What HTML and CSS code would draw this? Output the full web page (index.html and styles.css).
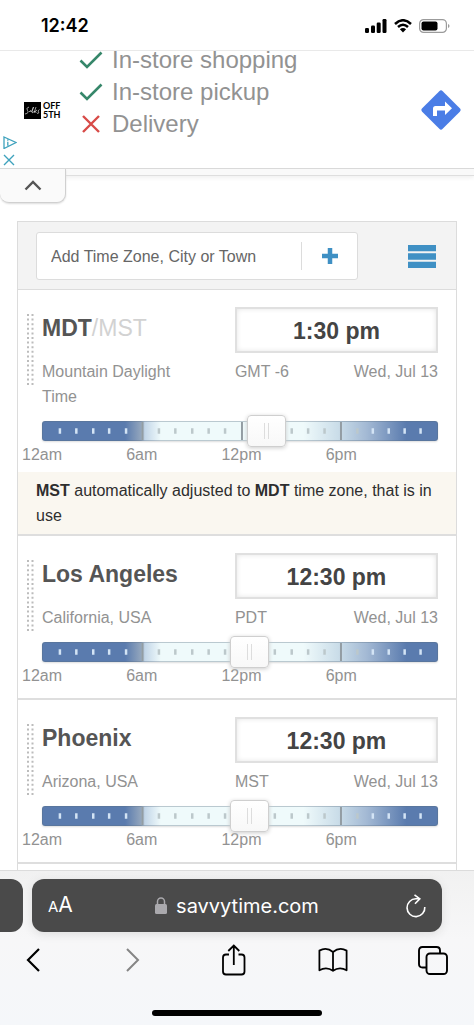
FILE: index.html
```html
<!DOCTYPE html>
<html lang="en">
<head>
<meta charset="utf-8">
<meta name="viewport" content="width=device-width, initial-scale=1">
<title>Time zone converter</title>
<link rel="stylesheet" href="styles.css">
</head>
<body>
<svg class="defs" aria-hidden="true">
  <symbol id="grip" viewBox="0 0 8 72">
    <path d="M2 0V72M6.500 0V72" stroke="#bcbcbc" stroke-width="2" stroke-dasharray="2 2.600" fill="none"/>
  </symbol>
  <symbol id="ticks" viewBox="0 0 396 20" preserveAspectRatio="none">
    <path d="M17 7v6M33.500 7v6M50.500 7v6M66.500 7v6M83.500 7v6M331.500 7v6M347.500 7v6M363.500 7v6M379.500 7v6" stroke="#d3e4f5" stroke-width="2.500"/>
    <path d="M116.500 7v6M133 7v6M150 7v6M166.500 7v6M183 7v6M216 7v6M233 7v6M250 7v6M266.500 7v6M283 7v6M316 7v6" stroke="#bcc8cb" stroke-width="2.500"/>
    <path d="M100 0v20M200 0v20M299.500 0v20" stroke="#939da3" stroke-width="2"/>
  </symbol>
  <symbol id="check" viewBox="0 0 24 18">
    <path d="M1.500 9.500L8 16L22.500 1.500" fill="none" stroke="#36876a" stroke-width="2.600"/>
  </symbol>
</svg>

<header class="status">
  <span class="clock">12:42</span>
  <span class="indicators">
    <svg width="22" height="14" viewBox="0 0 22 14"><rect x="0" y="9" width="4" height="5" rx="1.200"/><rect x="6" y="6.500" width="4" height="7.500" rx="1.200"/><rect x="11.700" y="3.500" width="4" height="10.500" rx="1.200"/><rect x="17.500" y="0" width="4" height="14" rx="1.200"/></svg>
    <svg width="18" height="14" viewBox="0 0 18 14"><path d="M1 5Q9-2.500 17 5M4 8Q9 3.500 14 8" fill="none" stroke="#000" stroke-width="2.500"/><path d="M9 13.500L5.900 10.200Q9 7.600 12.100 10.200Z"/></svg>
    <svg width="31" height="14" viewBox="0 0 31 14"><rect x=".6" y=".6" width="26.800" height="12.800" rx="4" fill="none" stroke="#9b9b9b" stroke-width="1.200"/><rect x="2.500" y="2.500" width="16" height="9" rx="2"/><path d="M29 5v4q1.500-.5 1.500-2T29 5Z" fill="#9b9b9b"/></svg>
  </span>
</header>

<main class="page">
  <section class="ad">
    <div class="ad-side">
      <div class="ad-logo">
        <svg width="17" height="17" viewBox="0 0 17 17"><rect width="17" height="17"/><path d="M5 5Q1.500 6 3.500 8.500T1 12M5 10q2-3 2 0q1-1 2.500-5Q7 12 9 10.500q2-3 2 0M12 5l-2 6M13 8l-2 1.500 1.500 1M15.500 7.500Q13 9 14.500 10t-1.500 1.500" fill="none" stroke="#ddd" stroke-width=".7"/></svg>
        <span>OFF<br>5TH</span>
      </div>
      <div class="ad-controls">
        <button aria-label="Ad choices"><svg width="14" height="13" viewBox="0 0 14 13"><path d="M1 1L13 6.500L1 12.500ZM4.800 5.800v4M4.800 3.400v1.400" fill="none" stroke="#3fa2bd" stroke-width="1.300"/></svg></button>
        <button aria-label="Close ad"><svg width="12" height="12" viewBox="0 0 12 12"><path d="M1 1L11 11M11 1L1 11" stroke="#3fa2bd" stroke-width="1.400"/></svg></button>
      </div>
    </div>
    <ul class="ad-list">
      <li><svg width="24" height="18"><use href="#check"/></svg>In-store shopping</li>
      <li><svg width="24" height="18"><use href="#check"/></svg>In-store pickup</li>
      <li><svg width="24" height="18" viewBox="0 0 24 18"><path d="M4 1L20 17M20 1L4 17" stroke="#d84b48" stroke-width="2.400"/></svg>Delivery</li>
    </ul>
    <a class="ad-route" href="#" aria-label="Directions">
      <svg width="40" height="40" viewBox="0 0 40 40"><path d="M18.300 1.200Q20-.5 21.700 1.200L38.800 18.300Q40.500 20 38.800 21.700L21.700 38.800Q20 40.500 18.300 38.800L1.200 21.700Q-.5 20 1.200 18.300Z" fill="#4a7de6"/><path d="M12 26V18.500Q12 16 14.500 16H24V11.500L31 18.200L24 25V20.500H16V26Z" fill="#fff"/></svg>
    </a>
  </section>
  <div class="fold">
    <button class="fold-tab" aria-label="Collapse ad"><svg width="18" height="11" viewBox="0 0 18 11"><path d="M1.500 9.500L9 2L16.500 9.500" fill="none" stroke="#555" stroke-width="2.400"/></svg></button>
  </div>

  <section class="card">
    <div class="toolbar">
      <form class="search">
        <input type="text" placeholder="Add Time Zone, City or Town" aria-label="Add Time Zone, City or Town">
        <button type="button" aria-label="Add"><svg width="18" height="18" viewBox="0 0 18 18"><path d="M9 1V17M1 9H17" stroke="#3f90c4" stroke-width="4.500"/></svg></button>
      </form>
      <button class="menu" aria-label="Menu"><svg width="28" height="23" viewBox="0 0 28 23"><path d="M0 3H28M0 11.500H28M0 20H28" stroke="#3f90c4" stroke-width="6.400"/></svg></button>
    </div>

    <article class="zone">
      <div class="zone-body noted">
        <svg class="grip" width="8" height="72"><use href="#grip"/></svg>
        <div class="info">
          <h2>MDT<span>/MST</span></h2>
          <input class="time" type="text" value="1:30 pm" aria-label="Time in MDT">
          <p class="place">Mountain Daylight Time</p>
          <p class="meta"><span>GMT -6</span><span>Wed, Jul 13</span></p>
          <div class="track"><svg><use href="#ticks"/></svg><input type="range" min="0" max="1440" value="810" aria-label="Hour in MDT"></div>
          <div class="hours"><span>12am</span><span>6am</span><span>12pm</span><span>6pm</span></div>
        </div>
      </div>
      <p class="note"><b>MST</b> automatically adjusted to <b>MDT</b> time zone, that is in use</p>
    </article>

    <article class="zone">
      <div class="zone-body">
        <svg class="grip" width="8" height="72"><use href="#grip"/></svg>
        <div class="info">
          <h2>Los Angeles</h2>
          <input class="time" type="text" value="12:30 pm" aria-label="Time in Los Angeles">
          <p class="place">California, USA</p>
          <p class="meta"><span>PDT</span><span>Wed, Jul 13</span></p>
          <div class="track"><svg><use href="#ticks"/></svg><input type="range" min="0" max="1440" value="750" aria-label="Hour in Los Angeles"></div>
          <div class="hours"><span>12am</span><span>6am</span><span>12pm</span><span>6pm</span></div>
        </div>
      </div>
    </article>

    <article class="zone">
      <div class="zone-body">
        <svg class="grip" width="8" height="72"><use href="#grip"/></svg>
        <div class="info">
          <h2>Phoenix</h2>
          <input class="time" type="text" value="12:30 pm" aria-label="Time in Phoenix">
          <p class="place">Arizona, USA</p>
          <p class="meta"><span>MST</span><span>Wed, Jul 13</span></p>
          <div class="track"><svg><use href="#ticks"/></svg><input type="range" min="0" max="1440" value="750" aria-label="Hour in Phoenix"></div>
          <div class="hours"><span>12am</span><span>6am</span><span>12pm</span><span>6pm</span></div>
        </div>
      </div>
    </article>
  </section>
</main>

<footer class="browser">
  <div class="tabs">
    <div class="tab-prev"></div>
    <div class="address">
      <button class="text-size" aria-label="Text size"><small>A</small>A</button>
      <div class="site"><svg width="12" height="17" viewBox="0 0 12 17"><rect x="0" y="7" width="12" height="10" rx="1.500" fill="#aaa9ad"/><path d="M2.500 8V4.500a3.500 3.500 0 0 1 7 0V8" fill="none" stroke="#aaa9ad" stroke-width="1.500"/></svg>savvytime.com</div>
      <button class="reload" aria-label="Reload"><svg width="20" height="24" viewBox="0 0 20 24"><path d="M18.800 13A8.900 8.900 0 1 1 10 4.800H13.500M8.500 .8L13.800 4.900L9 9.800" fill="none" stroke="#fff" stroke-width="1.600"/></svg></button>
    </div>
  </div>
  <nav class="actions">
    <button aria-label="Back"><svg width="14" height="24" viewBox="0 0 14 24"><path d="M13 1L2 12L13 23" fill="none" stroke="#000" stroke-width="2.200"/></svg></button>
    <button aria-label="Forward"><svg width="14" height="24" viewBox="0 0 14 24"><path d="M1 1L12 12L1 23" fill="none" stroke="#858585" stroke-width="2"/></svg></button>
    <button aria-label="Share"><svg width="26" height="32" viewBox="0 0 26 32"><path d="M9 10.500H6Q3 10.500 3 13.500V27.500Q3 30.500 6 30.500H21.500Q24.500 30.500 24.500 27.500V13.500Q24.500 10.500 21.500 10.500H18.500M13.800 21V2M8.300 7L13.800 1.500L19.300 7" fill="none" stroke="#000" stroke-width="1.800"/></svg></button>
    <button aria-label="Bookmarks"><svg width="32" height="26" viewBox="0 0 32 26"><path d="M16 4.500Q9-1.500 1.500 3V24Q9 19.500 16 24.500Q23 19.500 30.500 24V3Q23-1.500 16 4.500V24.500" fill="none" stroke="#000" stroke-width="1.900" stroke-linejoin="round"/></svg></button>
    <button aria-label="Tabs"><svg width="30" height="29" viewBox="0 0 30 29"><rect x="8.500" y="7.500" width="20.500" height="20.500" rx="3.500" fill="none" stroke="#000" stroke-width="1.900"/><path d="M8 21.500H4.500Q1 21.500 1 18V4.500Q1 1 4.500 1H18.500Q22 1 22 4.500V7" fill="none" stroke="#000" stroke-width="1.900"/></svg></button>
  </nav>
  <div class="home"></div>
</footer>
</body>
</html>
```
FILE: styles.css
```css
* { box-sizing: border-box; }

body {
  margin: 0;
  height: 100vh;
  display: flex;
  flex-direction: column;
  background: #fff;
  color: #555;
  font: 16px/25px "Liberation Sans", Arial, sans-serif;
}

h2, p, ul { margin: 0; padding: 0; }
svg { display: block; }
button { padding: 0; border: 0; background: none; color: inherit; font: inherit; }
.defs { position: absolute; width: 0; height: 0; }

/* Status bar */
.status {
  flex: none;
  height: 51px;
  padding: 2px 24px 0 41px;
  display: flex;
  align-items: center;
  justify-content: space-between;
  border-bottom: 1px solid #e9e9e9;
  color: #000;
}
.clock { font: 600 18px/24px Inter, sans-serif; }
.indicators { display: flex; gap: 7px; }

.page {
  flex: 1;
  min-height: 0;
  overflow: hidden;
  display: flex;
  flex-direction: column;
}

/* Advertisement */
.ad {
  flex: none;
  height: 118px;
  padding-right: 13px;
  display: flex;
  align-items: center;
  border-bottom: 1px solid #d6d6d6;
}
.ad-side {
  width: 79px;
  padding-top: 50px;
  align-self: stretch;
  display: flex;
  flex-direction: column;
  gap: 17px;
}
.ad-logo {
  padding-left: 24px;
  display: flex;
  align-items: center;
  gap: 2px;
  color: #000;
  font: 700 9px/9px Lato, sans-serif;
}
.ad-controls {
  padding-left: 3px;
  display: flex;
  flex-direction: column;
  align-items: flex-start;
  gap: 5px;
}
.ad-list {
  flex: 1;
  align-self: flex-start;
  margin-top: -7px;
  list-style: none;
  color: #929292;
  font-size: 24px;
  line-height: 32px;
}
.ad-list li { display: flex; align-items: center; gap: 9px; }

.fold {
  flex: none;
  height: 7px;
  margin-bottom: 45px;
  border-bottom: 1px solid #dedede;
  background: #f9f9f9;
  box-shadow: 0 2px 4px #f0f0f0;
}
.fold-tab {
  width: 66px;
  height: 34px;
  display: grid;
  place-items: center;
  background: #fafafa;
  border: solid #d0d0d0;
  border-width: 0 1px 1px 0;
  border-radius: 0 0 9px 9px;
  box-shadow: 0 1px 2px #ddd;
}

/* Converter */
.card {
  flex: 1 0 auto;
  margin: 0 17px;
  border: 1px solid #dcdcdc;
  border-bottom: 0;
}
.toolbar {
  padding: 10px 20px 9px 18px;
  display: flex;
  align-items: center;
  gap: 50px;
  background: #f3f3f3;
  border-bottom: 1px solid #dcdcdc;
}
.search {
  flex: 1;
  height: 48px;
  display: flex;
  align-items: center;
  background: #fff;
  border: 1px solid #dcdcdc;
  border-radius: 3px;
}
.search input {
  flex: 1;
  min-width: 0;
  padding: 0 0 0 14px;
  border: 0;
  outline: 0;
  background: none;
  font: inherit;
}
.search input::placeholder { color: #666; opacity: 1; }
.search button {
  width: 56px;
  height: 28px;
  display: grid;
  place-items: center;
  border-left: 1px solid #dcdcdc;
}

.zone { border-bottom: 2px solid #dedede; }
.zone-body {
  padding: 17px 18px 10px 8px;
  display: flex;
  gap: 8px;
}
.zone-body.noted { padding-bottom: 5px; }
.grip { flex: none; margin-top: 7px; }
.info {
  flex: 1;
  min-width: 0;
  display: grid;
  grid-template-columns: 19fr 20fr;
}
.info h2 { font-size: 23px; line-height: 42px; font-weight: 700; }
.info h2 span { color: #d2d2d2; font-weight: 400; }
.time {
  width: 100%;
  min-width: 0;
  height: 46px;
  padding: 2px 0 0;
  border: 2px solid #e0e0e0;
  border-radius: 0;
  box-shadow: inset 0 0 5px #e4e4e4;
  background: #fff;
  color: #444;
  text-align: center;
  font: 700 23px/40px "Liberation Sans", Arial, sans-serif;
}
.place, .meta { margin-top: 6px; color: #929292; }
.place { padding-right: 40px; }
.meta { display: flex; justify-content: space-between; }

.track {
  grid-column: 1 / -1;
  position: relative;
  height: 20px;
  margin-top: 12px;
  border: 1px solid rgba(90, 110, 130, .35);
  border-radius: 3px;
  background: linear-gradient(90deg, #5a7bae 21%, #93a6bd 25%, #c3d6e8 26%, #effafb 30%, #effafb 66%, #c9dce8 75%, #a3b9d4 82%, #5a7bae 92%) border-box;
  box-shadow: 0 1px 2px #ddd;
}
.track svg { width: 100%; height: 100%; }
.track input {
  position: absolute;
  inset: -7px -23px -7px -20px;
  width: auto;
  margin: 0;
  appearance: none;
  background: none;
}
.track input::-webkit-slider-thumb {
  appearance: none;
  width: 39px;
  height: 32px;
  border: 1px solid #cfcfcf;
  border-radius: 4px;
  background:
    linear-gradient(#ddd, #ddd) 16px 7px / 1px 16px no-repeat,
    linear-gradient(#ddd, #ddd) 20px 7px / 1px 16px no-repeat,
    linear-gradient(#fff, #f8f8f8);
  box-shadow: 0 1px 4px #ccc;
}
.hours {
  grid-column: 1 / -1;
  margin: 1px -3px 0 0;
  display: grid;
  grid-template-columns: repeat(4, 1fr);
  color: #929292;
}
.hours span { width: 60px; margin-left: -30px; text-align: center; }

.note {
  padding: 6px 18px;
  background: #faf7f0;
  color: #2e2e2e;
}

/* Browser controls */
.browser {
  flex: none;
  padding: 8px 0 9px;
  border-top: 1px solid #dcdcdc;
  background: linear-gradient(#f1f1f1, #f7f7f8 45%, #f5f7fa);
}
.tabs { display: flex; gap: 9px; padding-right: 32px; }
.tab-prev {
  width: 23px;
  background: #4a4a4a;
  border-radius: 0 12px 12px 0;
}
.address {
  flex: 1;
  height: 53px;
  padding: 0 16px;
  display: grid;
  grid-template-columns: 1fr auto 1fr;
  align-items: center;
  background: #4a4a4a;
  border-radius: 12px;
  box-shadow: 0 2px 10px #ddd;
  color: #fff;
  font: 20px/26px Inter, sans-serif;
}
.text-size { justify-self: start; }
.text-size { font-size: 21px; }
.text-size small { font-size: 15px; }
.site { display: flex; align-items: center; gap: 9px; }
.reload { justify-self: end; }

.actions {
  height: 56px;
  padding: 0 26px 0 18px;
  display: flex;
  align-items: center;
  justify-content: space-between;
}
.actions button {
  width: 30px;
  display: flex;
  justify-content: center;
}
.home {
  width: 170px;
  height: 6px;
  margin: 22px auto 0;
  border-radius: 3px;
  background: #000;
}
```
